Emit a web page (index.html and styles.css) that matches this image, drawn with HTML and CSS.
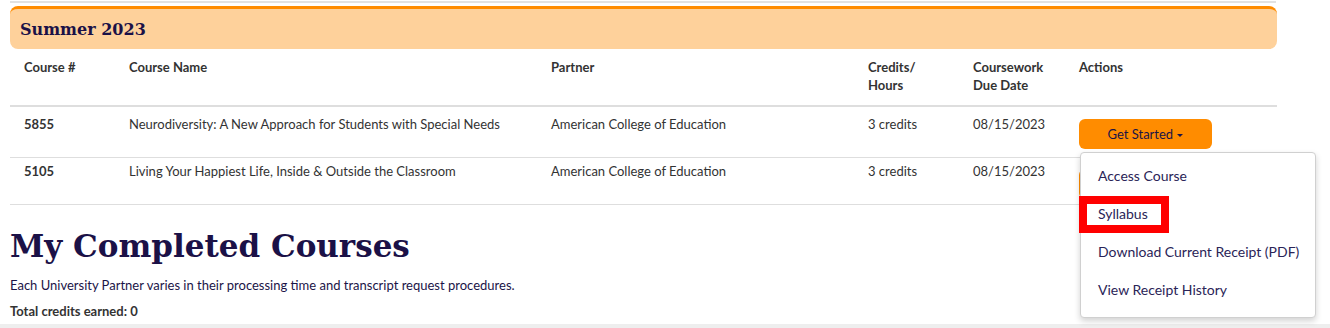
FILE: index.html
```html
<!DOCTYPE html>
<html>
<head>
<meta charset="utf-8">
<link rel="stylesheet" href="styles.css">
</head>
<body>
<div class="page">
  <div class="topline"></div>
  <section class="term">
    <div class="term-head"><h2>Summer 2023</h2></div>
    <table class="courses">
      <thead>
        <tr>
          <th class="c-num">Course #</th>
          <th class="c-name">Course Name</th>
          <th class="c-partner">Partner</th>
          <th class="c-credits">Credits/<br>Hours</th>
          <th class="c-due">Coursework<br>Due Date</th>
          <th class="c-actions">Actions</th>
        </tr>
      </thead>
      <tbody>
        <tr class="r1">
          <td class="num">5855</td>
          <td>Neurodiversity: A New Approach for Students with Special Needs</td>
          <td>American College of Education</td>
          <td>3 credits</td>
          <td>08/15/2023</td>
          <td class="act">
            <div class="dd">
              <button class="btn">Get Started <span class="caret"></span></button>
              <ul class="menu">
                <li>Access Course</li>
                <li class="hl"><span class="mark">Syllabus</span></li>
                <li>Download Current Receipt (PDF)</li>
                <li>View Receipt History</li>
              </ul>
            </div>
          </td>
        </tr>
        <tr class="r2">
          <td class="num">5105</td>
          <td>Living Your Happiest Life, Inside &amp; Outside the Classroom</td>
          <td>American College of Education</td>
          <td>3 credits</td>
          <td>08/15/2023</td>
          <td class="act"><button class="btn btn2" aria-label="Get Started"></button></td>
        </tr>
      </tbody>
    </table>
  </section>
  <section class="completed">
    <h1>My Completed Courses</h1>
    <p class="note">Each University Partner varies in their processing time and transcript request procedures.</p>
    <p class="total">Total credits earned: 0</p>
  </section>
</div>
<div class="bottomband"></div>
</body>
</html>
```
FILE: styles.css
```css
html, body { margin: 0; padding: 0; background: #fff; }
body { font-family: Lato, "Open Sans", sans-serif; color: #1b1447; height: 328px; overflow: hidden; position: relative; }
.page { padding: 0 53px 0 10px; }
.topline { height: 2px; background: #e2e2e2; margin: 1px 0 3px 0; width: 1266px; }
.term-head { background: #fed19b; border-top: 3px solid #ff8c00; border-radius: 8px; height: 40px; display: flex; align-items: center; padding: 0 10px; width: 1247px; }
.term-head h2 { margin: 0; font-family: "DejaVu Serif", serif; font-weight: bold; font-size: 16px; color: #1b1147; }
.courses { border-collapse: collapse; width: 1267px; font-size: 13px; color: #333; }
.courses th { text-align: left; font-weight: bold; vertical-align: top; padding: 9px 0 11px 0; height: 36px; line-height: 18px; border-bottom: 2px solid #dedede; }
.courses td { vertical-align: top; border-bottom: 1px solid #dedede; line-height: 16px; }
.r1 td { padding: 9px 0 0 0; height: 41px; }
.r2 td { padding: 5px 0 0 0; height: 41px; }
.c-num { width: 105px; padding-left: 14px !important; }
.courses td.num { padding-left: 14px; font-weight: bold; }
.c-name { width: 422px; }
.c-partner { width: 317px; }
.c-credits { width: 105px; }
.c-due { width: 106px; }
.dd { position: relative; padding-top: 3px; }
.btn { background: #ff8c00; color: #1b1447; border: none; border-radius: 6px; width: 133px; height: 30px; font-family: Lato, sans-serif; font-size: 13px; margin: 0; padding: 0; display: block; }
.btn2 { margin-top: 6px; }
.caret { display: inline-block; width: 0; height: 0; border-left: 3px solid transparent; border-right: 3px solid transparent; border-top: 3px solid #1b1447; vertical-align: middle; margin-left: 1px; }
.menu { position: absolute; left: 1px; top: 36px; z-index: 5; list-style: none; margin: 0; padding: 4px 0 8px 0; width: 234px; background: #fff; border: 1px solid #d0d0d0; border-radius: 4px; box-shadow: 0 3px 6px rgba(0,0,0,0.18); font-size: 14px; color: #2a2457; }
.menu li { height: 38px; line-height: 38px; padding-left: 17px; }
.mark { display: inline-block; position: relative; line-height: 18px; }
.mark::before { content: ""; position: absolute; left: -19px; top: -9px; width: 74px; height: 21px; border: 8px solid #ff0000; }
.completed { padding-top: 21px; }
.completed h1 { margin: 0; font-family: "DejaVu Serif", serif; font-weight: bold; font-size: 31px; line-height: 40px; color: #1b1147; }
.note { margin: 11px 0 0 0; font-size: 13px; line-height: 16px; color: #1b1447; }
.total { margin: 10px 0 0 0; font-size: 13px; line-height: 16px; font-weight: bold; color: #333; }
.bottomband { position: absolute; left: 0; right: 0; top: 324px; height: 4px; background: #eeeeee; }
```
